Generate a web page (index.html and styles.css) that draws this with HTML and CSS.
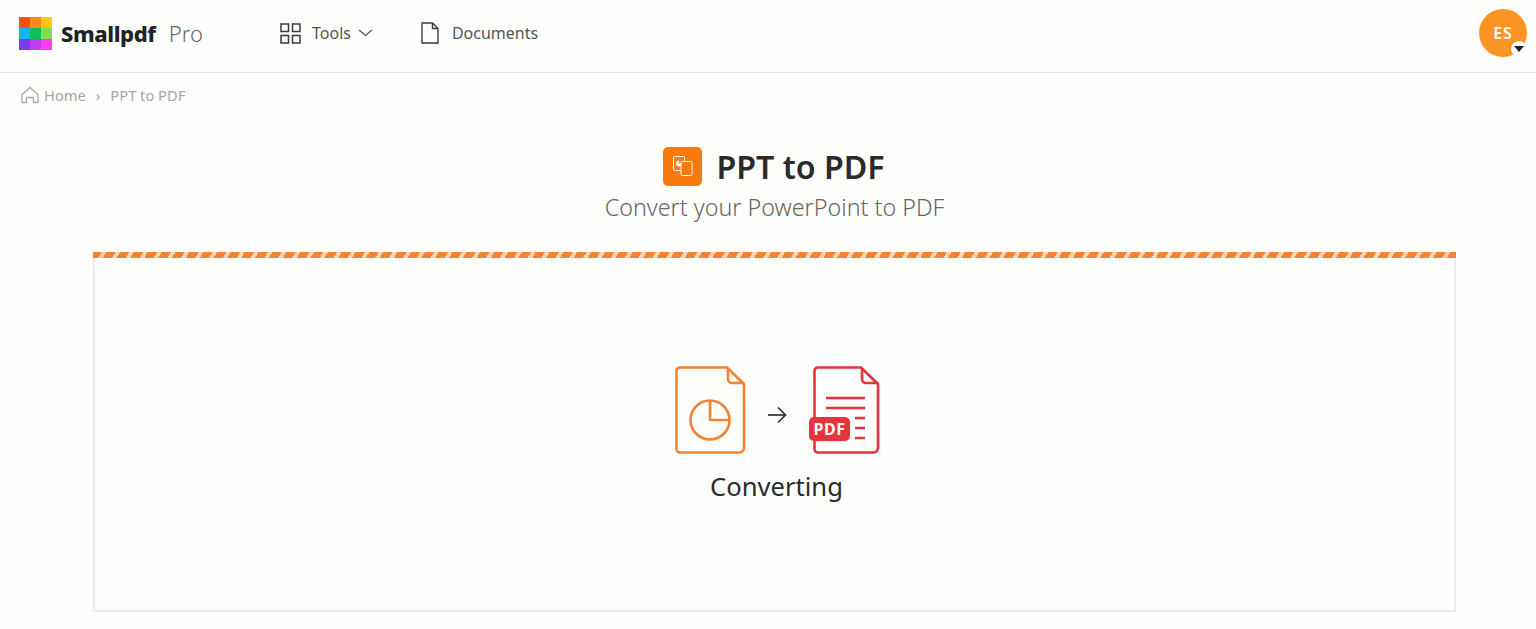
FILE: index.html
```html
<!DOCTYPE html>
<html lang="en">
<head>
    <meta charset="UTF-8">
    <meta name="viewport" content="width=device-width, initial-scale=1.0">
    <title>PPT to PDF</title>
    <link rel="stylesheet" href="styles.css">
</head>
<body>
    <header class="topbar">
        <a href="#" class="logo">
            <svg class="logo-mark" width="33" height="33" viewBox="0 0 33 33">
                <rect x="0" y="0" width="11" height="11" fill="#fb4f14"/>
                <rect x="11" y="0" width="11" height="11" fill="#fb8a1e"/>
                <rect x="22" y="0" width="11" height="11" fill="#ffc80f"/>
                <rect x="0" y="11" width="11" height="11" fill="#14b4ee"/>
                <rect x="11" y="11" width="11" height="11" fill="#10bd5a"/>
                <rect x="22" y="11" width="11" height="11" fill="#86dc4c"/>
                <rect x="0" y="22" width="11" height="11" fill="#7c3cec"/>
                <rect x="11" y="22" width="11" height="11" fill="#c43cf0"/>
                <rect x="22" y="22" width="11" height="11" fill="#f840ee"/>
            </svg>
            <span class="logo-name">Smallpdf</span>
            <span class="logo-plan">Pro</span>
        </a>
        <nav class="nav">
            <a href="#" class="nav-item nav-tools">
                <svg width="21" height="21" viewBox="0 0 21 21" fill="none" stroke="#3a3a3a" stroke-width="1.5">
                    <rect x="1" y="1" width="7.5" height="7.5"/>
                    <rect x="12.5" y="1" width="7.5" height="7.5"/>
                    <rect x="1" y="12.5" width="7.5" height="7.5"/>
                    <rect x="12.5" y="12.5" width="7.5" height="7.5"/>
                </svg>
                <span>Tools</span>
                <svg width="15" height="8" viewBox="0 0 15 8" fill="none" stroke="#555" stroke-width="1.3">
                    <path d="M1 1L7.5 6.5L14 1"/>
                </svg>
            </a>
            <a href="#" class="nav-item">
                <svg width="18" height="22" viewBox="0 0 18 22" fill="none" stroke="#3a3a3a" stroke-width="1.4">
                    <path d="M1 1H11.5L17 6.5V21H1Z"/>
                    <path d="M11.5 1V6.5H17"/>
                </svg>
                <span>Documents</span>
            </a>
        </nav>
        <div class="avatar">
            ES
            <span class="avatar-caret"></span>
        </div>
    </header>

    <div class="breadcrumb">
        <svg width="18" height="18" viewBox="0 0 18 18" fill="none" stroke="#a8a8a8" stroke-width="1.3" stroke-linejoin="round">
            <path d="M1 8.5L9 1.5L17 8.5V16.5H12.5V11.5H5.5V16.5H1Z"/>
        </svg>
        <a href="#">Home</a>
        <span class="breadcrumb-sep">›</span>
        <a href="#">PPT to PDF</a>
    </div>

    <main class="page">
        <div class="title-row">
            <span class="tool-icon">
                <svg width="24" height="24" viewBox="0 0 24 24" fill="none" stroke="#fff" stroke-width="1">
                    <rect x="2.5" y="2.5" width="11" height="14" rx="1" fill="#f97a0a"/>
                    <path d="M8 6.5A3 3 0 1 0 11 9.5H8Z" fill="#fff" stroke="none"/>
                    <rect x="10" y="7.5" width="11" height="14" rx="1" fill="#f97a0a"/>
                </svg>
            </span>
            <h1>PPT to PDF</h1>
        </div>
        <p class="subtitle">Convert your PowerPoint to PDF</p>

        <section class="convert-box">
            <div class="stripes"></div>
            <div class="convert-body">
                <div class="convert-icons">
                    <svg width="72" height="88" viewBox="0 0 72 88" fill="none" stroke="#f58233" stroke-width="2.600" stroke-linejoin="round">
                        <path d="M5 1.500H52L69 18V82A4.500 4.500 0 0 1 64.500 86.500H5A3.500 3.500 0 0 1 1.500 83V5A3.500 3.500 0 0 1 5 1.500Z"/>
                        <path d="M53 2V13A4 4 0 0 0 57 17H69"/>
                        <circle cx="35" cy="54" r="19.500"/>
                        <path d="M35 34.500V54H54.500"/>
                    </svg>
                    <svg class="arrow" width="20" height="18" viewBox="0 0 20 18" fill="none" stroke="#333" stroke-width="1.700">
                        <path d="M1 9H18.500"/>
                        <path d="M11 1.500L18.500 9L11 16.500"/>
                    </svg>
                    <svg width="72" height="88" viewBox="0 0 72 88" fill="none" stroke="#e5343d" stroke-width="2.600" stroke-linejoin="round">
                        <path d="M9 1.500H52L69 18V82A4.500 4.500 0 0 1 64.500 86.500H9A3.500 3.500 0 0 1 5.500 83V5A3.500 3.500 0 0 1 9 1.500Z"/>
                        <path d="M17 32H56M17 42H56M46 52H56M46 62H56M46 72H56"/>
                        <path d="M53 2V13A4 4 0 0 0 57 17H69"/>
                        <rect x="0" y="51" width="41" height="24" rx="5" fill="#e5343d" stroke="none"/>
                        <text x="20.500" y="69" class="pdf-tag">PDF</text>
                    </svg>
                </div>
                <div class="convert-label">Converting</div>
            </div>
        </section>
    </main>
</body>
</html>
```

FILE: styles.css
```css
* {
    box-sizing: border-box;
}
body {
    margin: 0;
    background: #fdfdfc;
    font-family: "Noto Sans", Arial, sans-serif;
    color: #333;
    height: 629px;
    overflow: hidden;
}
a {
    color: inherit;
    text-decoration: none;
}
.topbar {
    display: flex;
    align-items: center;
    height: 73px;
    padding: 0 9px 6px 19px;
    border-bottom: 1px solid #e2e2e2;
}
.logo {
    display: flex;
    align-items: center;
    width: 261px;
}
.logo-mark {
    margin-right: 9px;
}
.logo-name {
    font-size: 22px;
    font-weight: 800;
    color: #222;
    letter-spacing: -0.4px;
}
.logo-plan {
    font-size: 22px;
    font-weight: 300;
    color: #666;
    margin-left: 13px;
}
.nav {
    display: flex;
    align-items: center;
    gap: 48px;
    flex: 1;
}
.nav-item {
    display: flex;
    align-items: center;
    gap: 13px;
    font-size: 16px;
    color: #555;
}
.nav-tools {
    gap: 11px;
}
.nav-tools span {
    margin-right: -4px;
}
.avatar {
    position: relative;
    display: flex;
    align-items: center;
    justify-content: center;
    width: 48px;
    height: 48px;
    border-radius: 50%;
    background: #fb9422;
    color: #fff;
    font-size: 16px;
    font-weight: 600;
    letter-spacing: 1px;
}
.avatar-caret {
    position: absolute;
    right: 0;
    bottom: 0;
    width: 16px;
    height: 16px;
    border-radius: 50%;
    background: #fff;
}
.avatar-caret::after {
    content: "";
    position: absolute;
    left: 3px;
    top: 5px;
    border-left: 5px solid transparent;
    border-right: 5px solid transparent;
    border-top: 6px solid #222;
}
.breadcrumb {
    display: flex;
    align-items: center;
    gap: 5px;
    height: 44px;
    padding: 0 0 0 21px;
    font-size: 14.700px;
    color: #a5a5a5;
}
.breadcrumb-sep {
    margin: 0 5px;
}
.page {
    padding: 0 80px 0 93px;
}
.title-row {
    display: flex;
    align-items: center;
    justify-content: center;
    gap: 14px;
    height: 40px;
    margin-top: 29px;
    padding-right: 1px;
}
.tool-icon {
    display: flex;
    align-items: center;
    justify-content: center;
    width: 39px;
    height: 39px;
    border-radius: 5px;
    background: #f97a0a;
}
h1 {
    margin: 0;
    font-size: 32.200px;
    font-weight: 600;
    color: #2b2b2b;
}
.subtitle {
    margin: 4px 0 0;
    text-align: center;
    font-size: 23.300px;
    font-weight: 300;
    line-height: 34px;
    color: #666;
}
.convert-box {
    margin-top: 28px;
    height: 360px;
    border: 2px solid #ececec;
    border-top: 0;
}
.stripes {
    height: 6px;
    margin: 0 -2px;
    background: repeating-linear-gradient(-60deg, #f58233 0, #f58233 8px, #fbd3b5 8px, #fbd3b5 12px);
}
.convert-body {
    display: flex;
    flex-direction: column;
    align-items: center;
    padding-top: 108px;
}
.convert-icons {
    display: flex;
    align-items: center;
    gap: 20px;
    margin-left: 7px;
}
.convert-icons .arrow {
    margin-top: 10px;
    margin-right: 2px;
}
.pdf-tag {
    fill: #fff;
    stroke: none;
    font-family: "Noto Sans", Arial, sans-serif;
    font-size: 16px;
    font-weight: 700;
    text-anchor: middle;
    letter-spacing: 0.5px;
}
.convert-label {
    margin-top: 13px;
    margin-left: 4px;
    font-size: 25.600px;
    line-height: 40px;
    color: #2b2b2b;
}
```
